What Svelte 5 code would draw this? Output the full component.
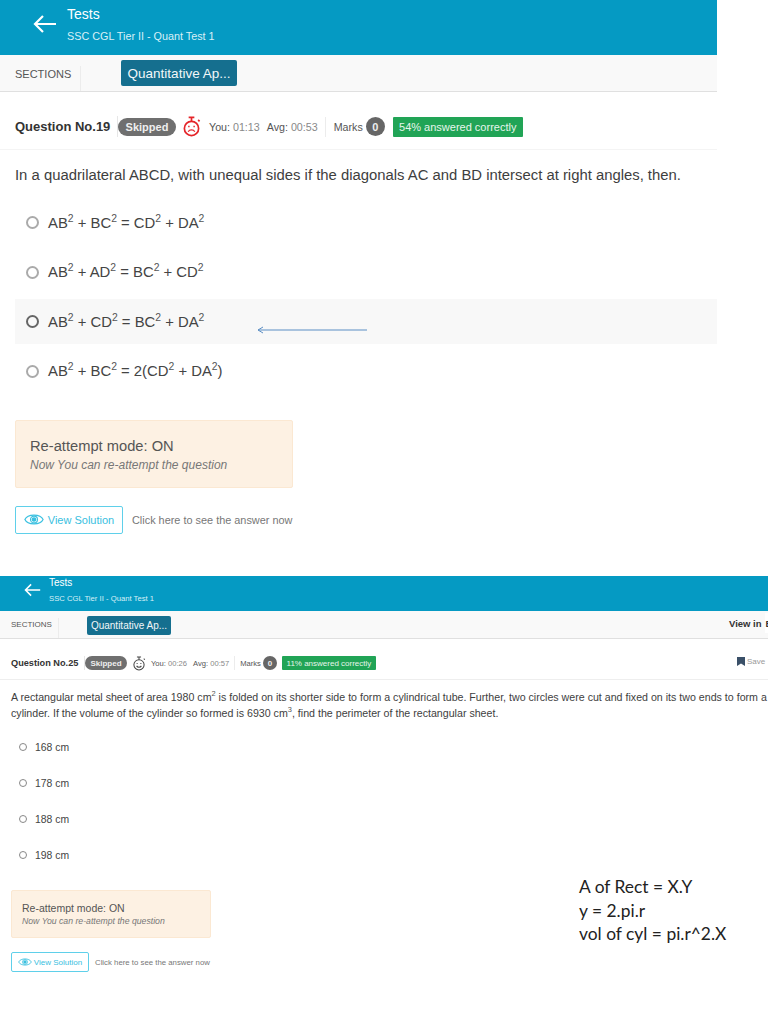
<script>
  const first = ['AB|2| + BC|2| = CD|2| + DA|2|', 'AB|2| + AD|2| = BC|2| + CD|2|', 'AB|2| + CD|2| = BC|2| + DA|2|', 'AB|2| + BC|2| = 2(CD|2| + DA|2|)'];
  const second = ['168 cm', '178 cm', '188 cm', '198 cm'];
  const parts = (s) => s.split('|');
</script>

{#snippet topbar()}
  <header class="topbar">
    <svg class="back" viewBox="0 0 24 20" fill="none" stroke="currentColor" stroke-width="2.2"><path d="M23 10H2M10 2l-8 8 8 8" /></svg>
    <div class="titles">
      <div class="title">Tests</div>
      <div class="sub">SSC CGL Tier II - Quant Test 1</div>
    </div>
  </header>
{/snippet}

{#snippet eye()}
  <svg class="eye" viewBox="0 0 22 12" fill="none" stroke="currentColor" stroke-width="1.3">
    <path d="M1 6c3-6.500 17-6.500 20 0-3 6.500-17 6.500-20 0z" />
    <circle cx="11" cy="6" r="3.800" />
    <circle cx="11" cy="6" r="1.900" fill="currentColor" />
  </svg>
{/snippet}

{#snippet footer()}
  <div class="notice">
    <div class="notice-title">Re-attempt mode: ON</div>
    <div class="notice-sub">Now You can re-attempt the question</div>
  </div>
  <div class="solution">
    <button>{@render eye()}View Solution</button>
    <span>Click here to see the answer now</span>
  </div>
{/snippet}

<div class="page">
  <section class="panel one">
    {@render topbar()}
    <nav class="sections">
      <span class="label">SECTIONS</span>
      <span class="tab">Quantitative Ap...</span>
    </nav>
    <div class="meta">
      <b class="qno">Question No.19</b>
      <span class="pill">Skipped</span>
      <svg class="timer sad" viewBox="0 0 20 22" fill="none" stroke="currentColor" stroke-width="1.800">
        <circle cx="10" cy="13" r="7.500" />
        <path d="M7 1.500h6M10 1.500v4M17 4l1.500 1.500" />
        <path d="M6.500 16.500c1.500-2.500 5.500-2.500 7 0" stroke-width="1.400" />
        <path d="M6.500 11h1.500M12 11h1.500" />
      </svg>
      <span class="time you"><i>You:</i> 01:13</span>
      <span class="time avg"><i>Avg:</i> 00:53</span>
      <span class="marks">Marks <em>0</em></span>
      <span class="rate">54% answered correctly</span>
    </div>
    <p class="stem">In a quadrilateral ABCD, with unequal sides if the diagonals AC and BD intersect at right angles, then.</p>
    <ul class="options">
      {#each first as opt, i}
        <li class:marked={i === 2}>
          <span class="radio"></span>
          <span>
            {#each parts(opt) as p, j}{#if j % 2}<sup>{p}</sup>{:else}{p}{/if}{/each}
          </span>
          {#if i === 2}
            <svg class="pointer" viewBox="0 0 110 8" fill="none" stroke="#5b8ec4" stroke-width="1"><path d="M110 4H1M6 1L1 4l5 3" /></svg>
          {/if}
        </li>
      {/each}
    </ul>
    {@render footer()}
  </section>

  <section class="panel two">
    {@render topbar()}
    <nav class="sections">
      <span class="label">SECTIONS</span>
      <span class="tab">Quantitative Ap...</span>
      <span class="view">View in <span class="view-box">E</span></span>
    </nav>
    <div class="meta">
      <b class="qno">Question No.25</b>
      <span class="pill">Skipped</span>
      <svg class="timer" viewBox="0 0 20 22" fill="none" stroke="currentColor" stroke-width="1.500">
        <circle cx="10" cy="13" r="7.500" />
        <path d="M7 1.500h6M10 1.500v4M17 4l1.500 1.500" />
        <path d="M6.500 14.500c1.500 2.500 5.500 2.500 7 0" />
        <path d="M6.500 11h1.500M12 11h1.500" />
      </svg>
      <span class="time you"><i>You:</i> 00:26</span>
      <span class="time avg"><i>Avg:</i> 00:57</span>
      <span class="marks">Marks <em>0</em></span>
      <span class="rate">11% answered correctly</span>
      <span class="save">
        <svg viewBox="0 0 8 9" fill="currentColor"><path d="M0 0h8v9L4 6.500 0 9z" /></svg>
        Save
      </span>
    </div>
    <p class="stem">A rectangular metal sheet of area 1980 cm<sup>2</sup> is folded on its shorter side to form a cylindrical tube. Further, two circles were cut and fixed on its two ends to form a<br />cylinder. If the volume of the cylinder so formed is 6930 cm<sup>3</sup>, find the perimeter of the rectangular sheet.</p>
    <div class="lower">
      <div class="lower-main">
        <ul class="options">
          {#each second as opt}
            <li><span class="radio"></span><span>{opt}</span></li>
          {/each}
        </ul>
        {@render footer()}
      </div>
      <div class="working">
        <div>A of Rect = X.Y</div>
        <div>y = 2.pi.r</div>
        <div>vol of cyl = pi.r^2.X</div>
      </div>
    </div>
  </section>
</div>

<style>
  :global(body) {
    margin: 0;
    background: #fff;
  }

  .page {
    width: 768px;
    height: 1024px;
    overflow: hidden;
    font-family: "Liberation Sans", Arial, sans-serif;
    color: #444;
  }

  .panel {
    box-sizing: border-box;
  }
  .panel.one {
    width: 717px;
    height: 576px;
  }
  .panel.two {
    width: 800px;
  }

  .topbar {
    display: flex;
    align-items: flex-start;
    background: #059ac3;
    color: #fff;
  }
  .back {
    flex: none;
  }
  .titles {
    display: flex;
    flex-direction: column;
  }
  .sub {
    color: #d8f0f7;
  }

  .sections {
    display: flex;
    background: #f9f9f9;
    border-bottom: 1px solid #e0e0e0;
    box-sizing: border-box;
  }
  .label {
    color: #555;
    border-right: 1px solid #ececec;
    box-sizing: border-box;
    display: flex;
    align-items: center;
  }
  .tab {
    background: #156f8f;
    color: #f2f7f9;
    border-radius: 2px;
    display: flex;
    align-items: center;
    justify-content: center;
    box-sizing: border-box;
  }
  .view {
    margin-left: auto;
    font-weight: bold;
    color: #333;
    font-size: 9.500px;
    display: flex;
    align-items: center;
    gap: 3px;
  }
  .view-box {
    background: #fff;
    width: 35px;
    padding-left: 1px;
    height: 20px;
    display: flex;
    align-items: center;
    box-sizing: border-box;
  }

  .meta {
    display: flex;
    align-items: center;
    border-bottom: 1px solid #f4f4f4;
    box-sizing: border-box;
  }
  .qno {
    color: #333;
    border-right: 1px solid #e6e6e6;
  }
  .pill {
    background: #6f6f6f;
    color: #eee;
    font-weight: bold;
    display: flex;
    align-items: center;
    justify-content: center;
  }
  .timer {
    flex: none;
    color: #444;
  }
  .timer.sad {
    color: #e5252a;
  }
  .time {
    color: #888;
  }
  .time i {
    font-style: normal;
    color: #555;
  }
  .marks {
    display: flex;
    align-items: center;
    color: #555;
    border-left: 1px solid #ececec;
  }
  .marks em {
    font-style: normal;
    font-weight: bold;
    background: #666;
    color: #eee;
    border-radius: 50%;
    display: flex;
    align-items: center;
    justify-content: center;
  }
  .rate {
    background: #21a456;
    color: #e6f6ec;
    border-radius: 1px;
    display: flex;
    align-items: center;
    justify-content: center;
  }
  .save {
    margin-left: auto;
    display: flex;
    align-items: center;
    gap: 2px;
    color: #999;
    font-size: 8px;
    width: 63px;
    margin-top: -4px;
  }
  .save svg {
    width: 8px;
    height: 9px;
    color: #3a5068;
  }

  .stem {
    margin: 0;
    white-space: nowrap;
    color: #3e3e3e;
  }
  sup {
    font-size: 70%;
    line-height: 0;
    color: #555;
  }

  .options {
    list-style: none;
    margin: 0;
    padding: 0;
  }
  .options li {
    display: flex;
    align-items: center;
    position: relative;
    box-sizing: border-box;
    color: #444;
  }
  .options li.marked {
    background: #f8f8f8;
  }
  .radio {
    flex: none;
    border-radius: 50%;
    border: 2px solid #aaa;
    box-sizing: border-box;
  }
  .marked .radio {
    border-color: #666;
  }
  .pointer {
    position: absolute;
    left: 242px;
    top: 27px;
    width: 110px;
    height: 8px;
  }

  .notice {
    background: #fdf1e3;
    border: 1px solid #fbe8d2;
    border-radius: 2px;
    box-sizing: border-box;
  }
  .notice-title {
    color: #555;
  }
  .notice-sub {
    color: #777;
    font-style: italic;
  }
  .solution {
    display: flex;
    align-items: center;
  }
  .solution button {
    display: flex;
    align-items: center;
    justify-content: center;
    background: #fff;
    border: 1px solid #5fd0ea;
    border-radius: 2px;
    color: #39c0e0;
    font-family: inherit;
    padding: 0;
    box-sizing: border-box;
  }
  .solution span {
    color: #777;
  }

  /* first capture, larger */
  .one .topbar { height: 55px; padding-left: 33px; }
  .one .back { width: 24px; height: 20px; margin-top: 14px; margin-right: 10px; }
  .one .titles { padding-top: 5px; gap: 7px; }
  .one .title { font-size: 14px; line-height: 18px; }
  .one .sub { font-size: 10.800px; line-height: 13px; }
  .one .sections { height: 37px; }
  .one .label { font-size: 11px; width: 81px; padding-left: 15px; margin-top: 11px; padding-bottom: 10px; }
  .one .tab { width: 116px; height: 26px; margin: 5px 0 0 40px; font-size: 13.500px; }
  .one .meta { height: 58px; padding: 12px 0 0 15px; font-size: 10.700px; }
  .one .qno { font-size: 13px; padding: 3px 1px 3px 0; width: 103px; white-space: nowrap; box-sizing: border-box; }
  .one .pill { width: 58px; height: 18px; border-radius: 9px; font-size: 11px; }
  .one .timer { width: 19px; height: 21px; margin: 0 8px 0 6px; }
  .one .avg { margin-left: 7px; }
  .one .marks { margin-left: 7px; padding-left: 8px; height: 20px; gap: 3px; }
  .one .marks em { width: 19px; height: 19px; font-size: 11px; }
  .one .rate { width: 130px; height: 20px; margin-left: 8px; font-size: 11px; }
  .one .stem { font-size: 14.850px; line-height: 20px; padding: 15px 0 0 15px; }
  .one .options { padding: 15px 0 0 15px; margin-top: 0; display: flex; flex-direction: column; gap: 4.500px; }
  .one .options li { height: 45px; padding-left: 11px; font-size: 14.850px; }
  .one .radio { width: 13px; height: 13px; margin-right: 9px; }
  .one .notice { width: 278px; height: 68px; margin: 26px 0 0 15px; padding: 15px 0 0 14px; }
  .one .notice-title { font-size: 14.700px; line-height: 20px; }
  .one .notice-sub { font-size: 12px; line-height: 18px; }
  .one .solution { margin: 18px 0 0 15px; }
  .one .solution button { width: 108px; height: 28px; font-size: 11px; }
  .one .eye { width: 20px; height: 11px; margin-right: 4px; }
  .one .solution span { margin-left: 9px; font-size: 10.900px; }

  /* second capture, smaller and cut off on the right */
  .two .topbar { height: 35px; padding-left: 24px; }
  .two .back { width: 17px; height: 14px; margin-top: 7px; margin-right: 8px; }
  .two .titles { padding-top: 1px; gap: 4px; }
  .two .title { font-size: 10px; line-height: 12px; }
  .two .sub { font-size: 7.700px; line-height: 10px; margin-top: 1px; }
  .two .sections { height: 28px; }
  .two .label { font-size: 8px; width: 59px; padding-left: 11px; margin-top: 7px; padding-bottom: 7px; }
  .two .tab { width: 84px; height: 19px; margin: 5px 0 0 28px; font-size: 10px; }
  .two .view { width: 71px; height: 24px; }
  .two .meta { height: 41px; padding: 8px 0 0 11px; font-size: 7.600px; border-bottom-color: #eee; }
  .two .qno { font-size: 9.200px; width: 74px; padding: 2px 0; white-space: nowrap; box-sizing: border-box; }
  .two .pill { width: 42px; height: 14px; border-radius: 7px; font-size: 8px; }
  .two .timer { width: 14px; height: 15px; margin: 0 5px 0 5px; }
  .two .avg { margin-left: 6px; }
  .two .marks { margin-left: 5px; padding-left: 5px; height: 14px; gap: 2px; }
  .two .marks em { width: 14px; height: 14px; font-size: 8px; }
  .two .rate { width: 94px; height: 14px; margin-left: 5px; font-size: 8px; }
  .two .stem { font-size: 10.650px; line-height: 16px; padding: 9px 0 0 11px; }
  .two .lower { display: flex; }
  .two .lower-main { width: 579px; }
  .two .options { padding-top: 8px; }
  .two .options li { height: 36px; padding-left: 19px; font-size: 10.400px; }
  .two .radio { width: 8px; height: 8px; margin-right: 8px; border-width: 1px; border-color: #888; }
  .two .notice { width: 200px; height: 48px; margin: 17px 0 0 11px; padding: 10px 0 0 10px; }
  .two .notice-title { font-size: 10.500px; line-height: 14px; }
  .two .notice-sub { font-size: 8.700px; line-height: 13px; }
  .two .solution { margin: 14px 0 0 11px; }
  .two .solution button { width: 78px; height: 20px; font-size: 8px; }
  .two .eye { width: 14px; height: 8px; margin-right: 2px; }
  .two .solution span { margin-left: 6px; font-size: 7.800px; }

  .working {
    padding-top: 154px;
    font-family: Lato, "Open Sans", sans-serif;
    font-size: 17.400px;
    line-height: 23.500px;
    color: #222;
    white-space: nowrap;
  }
</style>
